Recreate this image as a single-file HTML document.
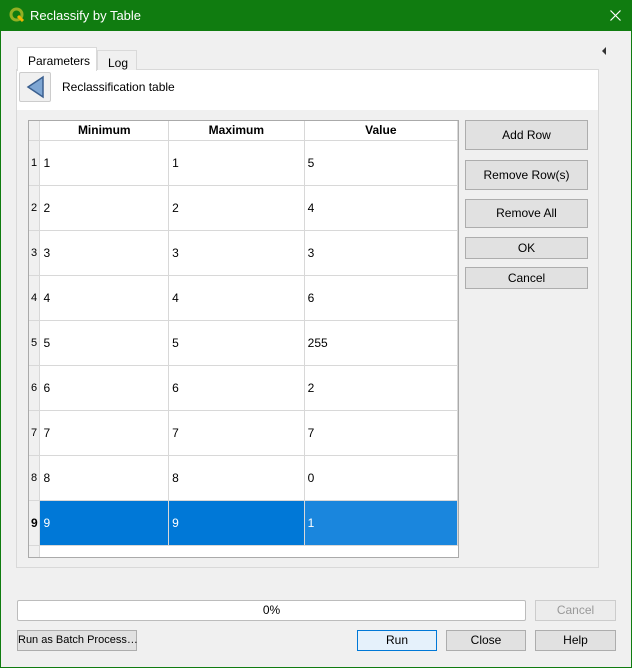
<!DOCTYPE html><html><head><style>
*{box-sizing:border-box}body{margin:0;width:632px;height:668px;position:relative;background:#f0f0f0;font-family:"Liberation Sans",sans-serif;font-size:12px;overflow:hidden}
.a{position:absolute}
.btn{position:absolute;background:#e1e1e1;border:1px solid #adadad;text-align:center;color:#000;white-space:nowrap}
.t td{border-right:1px solid #d8d8d8;border-bottom:1px solid #d8d8d8;padding:0 0 0 3px;height:45px;background:#fff}
.t{border-collapse:collapse;table-layout:fixed}
.t th{background:#fff;border-right:1px solid #d8d8d8;border-bottom:1px solid #d8d8d8;height:19px;font-size:12px;padding-top:1px}
.t td.h{background:#f0f0f0;padding:0 0 0 2px;font-size:11px}
</style></head><body>
<div class="a" style="left:0;top:0;width:632px;height:668px;border:1px solid #107c10"></div>
<div class="a" style="left:0;top:0;width:632px;height:31px;background:#107c10;color:#fff;font-size:13px">
<svg class="a" style="left:9px;top:7px" width="16" height="16" viewBox="0 0 16 16"><circle cx="7.5" cy="7.5" r="5.5" fill="none" stroke="#93b023" stroke-width="3"/><path d="M9 9 L14 14" stroke="#f0b400" stroke-width="3"/></svg>
<span class="a" style="left:30px;top:8px">Reclassify by Table</span>
<svg class="a" style="left:610px;top:10px" width="11" height="11"><path d="M0.5 0.5 L10.5 10.5 M10.5 0.5 L0.5 10.5" stroke="#fff" stroke-width="1.2"/></svg></div>
<div class="a" style="left:602px;top:47px;width:0;height:0;border-top:4px solid transparent;border-bottom:4px solid transparent;border-right:4px solid #333"></div>
<div class="a" style="left:16px;top:69px;width:583px;height:499px;border:1px solid #d9d9d9;background:#f0f0f0"></div>
<div class="a" style="left:17px;top:70px;width:581px;height:40px;background:#fff"></div>
<div class="a" style="left:17px;top:47px;width:80px;height:24px;background:#fff;border:1px solid #d9d9d9;border-bottom:none;padding:6px 0 0 10px">Parameters</div>
<div class="a" style="left:97px;top:50px;width:40px;height:20px;background:#f0f0f0;border:1px solid #d9d9d9;border-bottom:none;padding:5px 0 0 10px">Log</div>
<div class="a" style="left:19px;top:72px;width:32px;height:30px;background:#f0f0f0;border:1px solid #ccc;border-radius:2px"><svg width="30" height="28"><path d="M8 14 L23 4 L23 24 Z" fill="#7ea6d3" stroke="#3a5f8f" stroke-width="1.5"/></svg></div>
<div class="a" style="left:62px;top:80px">Reclassification table</div>
<div class="a" style="left:28px;top:120px;width:431px;height:438px;border:1px solid #aaa;background:#fff">
<table class="t"><colgroup><col style="width:11px"><col style="width:129px"><col style="width:136px"><col style="width:154px"></colgroup>
<tr><th style="background:#f0f0f0"></th><th>Minimum</th><th>Maximum</th><th>Value</th></tr>
<tr><td class="h">1</td><td>1</td><td>1</td><td>5</td></tr>
<tr><td class="h">2</td><td>2</td><td>2</td><td>4</td></tr>
<tr><td class="h">3</td><td>3</td><td>3</td><td>3</td></tr>
<tr><td class="h">4</td><td>4</td><td>4</td><td>6</td></tr>
<tr><td class="h">5</td><td>5</td><td>5</td><td>255</td></tr>
<tr><td class="h">6</td><td>6</td><td>6</td><td>2</td></tr>
<tr><td class="h">7</td><td>7</td><td>7</td><td>7</td></tr>
<tr><td class="h">8</td><td>8</td><td>8</td><td>0</td></tr>
<tr><td class="h" style="font-weight:bold;font-size:12px">9</td><td style="background:#0078d7;color:#fff">9</td><td style="background:#0078d7;color:#fff">9</td><td style="background:#1a86dd;color:#fff">1</td></tr>
<tr><td class="h" style="height:12px;border-bottom:none"></td><td colspan="3" style="height:12px;border:none"></td></tr>
</table></div>
<div class="btn" style="left:465px;top:120px;width:123px;height:30px;line-height:28px">Add Row</div>
<div class="btn" style="left:465px;top:160px;width:123px;height:30px;line-height:28px">Remove Row(s)</div>
<div class="btn" style="left:465px;top:199px;width:123px;height:29px;line-height:27px">Remove All</div>
<div class="btn" style="left:465px;top:237px;width:123px;height:22px;line-height:20px">OK</div>
<div class="btn" style="left:465px;top:267px;width:123px;height:22px;line-height:20px">Cancel</div>
<div class="a" style="left:17px;top:600px;width:509px;height:21px;background:#fff;border:1px solid #bcbcbc;border-radius:2px;text-align:center;line-height:19px">0%</div>
<div class="btn" style="left:535px;top:600px;width:81px;height:21px;line-height:19px;color:#999;background:#ececec;border-color:#ccc">Cancel</div>
<div class="btn" style="left:17px;top:630px;width:120px;height:21px;line-height:19px;font-size:11px">Run as Batch Process…</div>
<div class="btn" style="left:357px;top:630px;width:80px;height:21px;line-height:19px;background:#e5f1fb;border-color:#0078d7">Run</div>
<div class="btn" style="left:446px;top:630px;width:80px;height:21px;line-height:19px">Close</div>
<div class="btn" style="left:535px;top:630px;width:81px;height:21px;line-height:19px">Help</div>
</body></html>
